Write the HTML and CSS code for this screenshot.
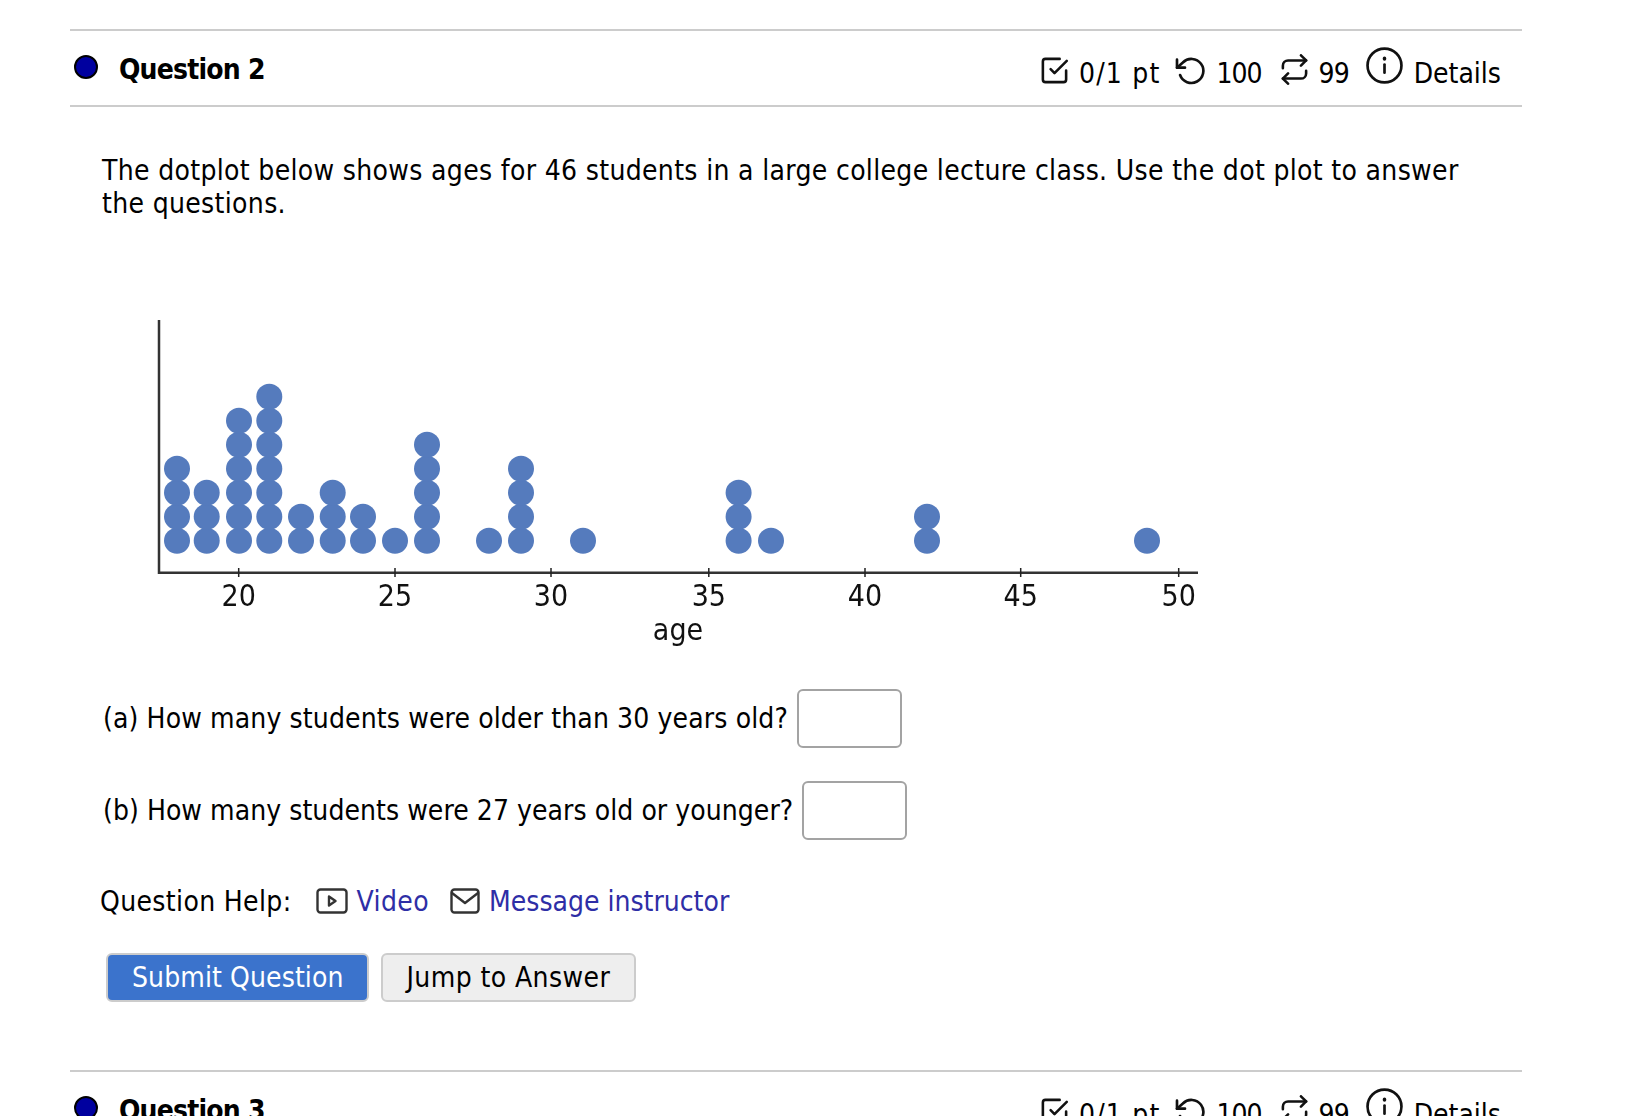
FILE: index.html
```html
<!DOCTYPE html>
<html lang="en">
<head>
<meta charset="utf-8">
<title>Question 2</title>
<link rel="stylesheet" href="styles.css">
</head>
<body>
<main class="page">
  <section class="question">
    <header class="q-head">
      <div class="q-title"><span class="bubble"></span><h2>Question 2</h2></div>
      <div class="q-meta">
        <svg class="ico ico-check" viewBox="0 0 24 24"><path d="M9 11l3 3L21.5 4.5"/><path d="M21 12v7a2 2 0 0 1-2 2H5a2 2 0 0 1-2-2V5a2 2 0 0 1 2-2h11"/></svg>
        <span class="m-pts">0/1 pt</span>
        <svg class="ico ico-undo" viewBox="0 0 24 24"><path d="M1.5 3.5v6h6"/><path d="M3.8 15a9 9 0 1 0 2.1-9.4L1.5 9.5"/></svg>
        <span class="m-tries">100</span>
        <svg class="ico ico-repeat" viewBox="0 0 24 24"><path d="M17 1l4 4-4 4"/><path d="M3 11V9a4 4 0 0 1 4-4h14"/><path d="M7 23l-4-4 4-4"/><path d="M21 13v2a4 4 0 0 1-4 4H3"/></svg>
        <span class="m-regen">99</span>
        <svg class="ico ico-info" viewBox="0 0 36 36"><circle cx="18" cy="18" r="16.5"/><path d="M18 17v8"/><path class="dot" d="M18 11v.6"/></svg>
        <span>Details</span>
      </div>
    </header>
    <div class="q-body">
      <p class="intro">The dotplot below shows ages for 46 students in a large college lecture class. Use the dot plot to answer the questions.</p>
      <svg class="plot" id="plot" viewBox="150 316 1060 340" role="img" aria-label="Dotplot of student ages">
        <g class="dots" id="dots"></g>
        <path class="axis" d="M159 320V572.7H1198"/>
        <path class="tick" d="M238.7 568v9M395 568v9M551 568v9M708.8 568v9M865 568v9M1020.7 568v9M1178.7 568v9"/>
        <g class="tick-label">
          <text x="238.7" y="606">20</text><text x="395" y="606">25</text><text x="551" y="606">30</text><text x="708.8" y="606">35</text><text x="865" y="606">40</text><text x="1020.7" y="606">45</text><text x="1178.7" y="606">50</text>
          <text x="678" y="640">age</text>
        </g>
      </svg>
      <div class="ask ask-a"><span>(a) How many students were older than 30 years old?</span><input class="answer" type="text" aria-label="Answer a"></div>
      <div class="ask ask-b"><span>(b) How many students were 27 years old or younger?</span><input class="answer" type="text" aria-label="Answer b"></div>
      <div class="help">
        <span class="help-label">Question Help:</span>
        <svg class="ico ico-video" viewBox="0 0 32 26"><rect x="1.5" y="1.5" width="29" height="23" rx="3"/><path d="M13 8.5l6.5 4.5-6.5 4.5z"/></svg>
        <a class="link link-video" href="#">Video</a>
        <svg class="ico ico-mail" viewBox="0 0 30 26"><rect x="1.5" y="1.5" width="27" height="23" rx="3"/><path d="M2 5l13 10L28 5"/></svg>
        <a class="link" href="#">Message instructor</a>
      </div>
      <div class="actions">
        <button class="btn btn-primary" type="button">Submit Question</button>
        <button class="btn btn-jump" type="button">Jump to Answer</button>
      </div>
    </div>
  </section>
  <section class="question">
    <header class="q-head">
      <div class="q-title"><span class="bubble"></span><h2>Question 3</h2></div>
      <div class="q-meta">
        <svg class="ico ico-check" viewBox="0 0 24 24"><path d="M9 11l3 3L21.5 4.5"/><path d="M21 12v7a2 2 0 0 1-2 2H5a2 2 0 0 1-2-2V5a2 2 0 0 1 2-2h11"/></svg>
        <span class="m-pts">0/1 pt</span>
        <svg class="ico ico-undo" viewBox="0 0 24 24"><path d="M1.5 3.5v6h6"/><path d="M3.8 15a9 9 0 1 0 2.1-9.4L1.5 9.5"/></svg>
        <span class="m-tries">100</span>
        <svg class="ico ico-repeat" viewBox="0 0 24 24"><path d="M17 1l4 4-4 4"/><path d="M3 11V9a4 4 0 0 1 4-4h14"/><path d="M7 23l-4-4 4-4"/><path d="M21 13v2a4 4 0 0 1-4 4H3"/></svg>
        <span class="m-regen">99</span>
        <svg class="ico ico-info" viewBox="0 0 36 36"><circle cx="18" cy="18" r="16.5"/><path d="M18 17v8"/><path class="dot" d="M18 11v.6"/></svg>
        <span>Details</span>
      </div>
    </header>
  </section>
</main>
<script src="plot.js"></script>
</body>
</html>
```
FILE: plot.js
```js
var columns = [[177,4],[206.7,3],[239,6],[269.3,7],[301,2],[332.7,3],[363,2],[395,1],[427,5],[489,1],[521,4],[583,1],[738.6,3],[771,1],[927,2],[1147,1]];
var group = document.getElementById('dots');
columns.forEach(function (c) {
  for (var i = 0; i < c[1]; i++) {
    var dot = document.createElementNS('http://www.w3.org/2000/svg', 'circle');
    dot.setAttribute('cx', c[0]);
    dot.setAttribute('cy', 540.7 - 24 * i);
    dot.setAttribute('r', 13);
    group.appendChild(dot);
  }
});
```
FILE: styles.css
```css
html, body { margin: 0; padding: 0; background: #fff; }
body {
  height: 1116px;
  overflow: hidden;
  color: #000;
  font-family: "DejaVu Sans Condensed", "DejaVu Sans", sans-serif;
  font-stretch: condensed;
  font-size: 28px;
  line-height: 33px;
}
.page { width: 1452px; margin-left: 70px; padding-top: 29px; }
.question { border-top: 2px solid #ccc; }
.q-head {
  display: flex;
  justify-content: space-between;
  align-items: center;
  height: 74px;
  border-bottom: 2px solid #ccc;
  padding: 0 21px 0 4px;
}
.q-title { display: flex; align-items: center; gap: 21px; }
.q-title h2 { margin: 0; padding-top: 3px; font-size: 28px; font-weight: bold; line-height: 33px; letter-spacing: -.8px; }
.bubble {
  width: 20px; height: 20px;
  margin-top: -2px;
  border: 2px solid #000;
  border-radius: 50%;
  background: #00009f;
}
.q-meta { display: flex; align-items: center; padding-top: 11px; }
.ico { fill: none; stroke: #111; stroke-width: 2; stroke-linecap: round; stroke-linejoin: round; display: block; flex: none; }
.ico-check { width: 31px; height: 31px; margin-right: 9px; margin-top: -6px; }
.m-pts { margin-right: 14px; letter-spacing: 1.2px; }
.ico-undo { width: 32px; height: 32px; margin-right: 10px; margin-top: -6px; }
.m-tries { margin-right: 17px; letter-spacing: -1px; }
.ico-repeat { width: 31px; height: 31px; margin-right: 9px; margin-top: -8px; }
.m-regen { margin-right: 17px; letter-spacing: -1px; }
.ico-info { width: 37px; height: 37px; margin-right: 11px; margin-top: -17px; stroke-width: 2.6; }
.ico-info .dot { stroke-width: 3.4; }
.q-body { padding-bottom: 68px; }
.intro { margin: 47px 0 0 32px; width: 1380px; letter-spacing: .33px; }
.plot { display: block; width: 1060px; height: 340px; margin: 96px 0 0 80px; filter: blur(.4px); }
.dots { fill: #557bbd; }
.axis { fill: none; stroke: #333; stroke-width: 2.5; }
.tick { fill: none; stroke: #222; stroke-width: 1.5; }
.tick-label { font-size: 30px; fill: #111; text-anchor: middle; }
.ask { display: flex; align-items: center; gap: 9px; margin-left: 33px; }
.ask-a { margin-top: 33px; letter-spacing: .13px; }
.ask-b { margin-top: 33px; letter-spacing: .06px; }
.answer {
  box-sizing: border-box;
  width: 105px; height: 59px;
  border: 2px solid #a3a3a3;
  border-radius: 6px;
  background: #fff;
}
.help { display: flex; align-items: center; height: 34px; margin: 44px 0 0 30px; }
.help-label { margin-right: 24px; letter-spacing: .35px; }
.ico-video { width: 32px; height: 26px; margin-right: 9px; stroke: #333; stroke-width: 2.4; }
.ico-mail { width: 30px; height: 26px; margin: 0 9px 0 21px; stroke: #333; stroke-width: 2.4; }
.link { color: #2e2ea6; text-decoration: none; }
.link-video { letter-spacing: .4px; }
.actions { display: flex; gap: 12px; margin: 35px 0 0 36px; }
.btn {
  box-sizing: border-box;
  height: 49px;
  padding: 0 24px;
  border: 2px solid #ccc;
  border-radius: 6px;
  background: #eee;
  color: #000;
  font: inherit;
}
.btn-primary { background: #3b73cc; color: #fff; letter-spacing: .1px; padding: 0 23px 0 24px; }
.btn-jump { letter-spacing: .4px; }
```
